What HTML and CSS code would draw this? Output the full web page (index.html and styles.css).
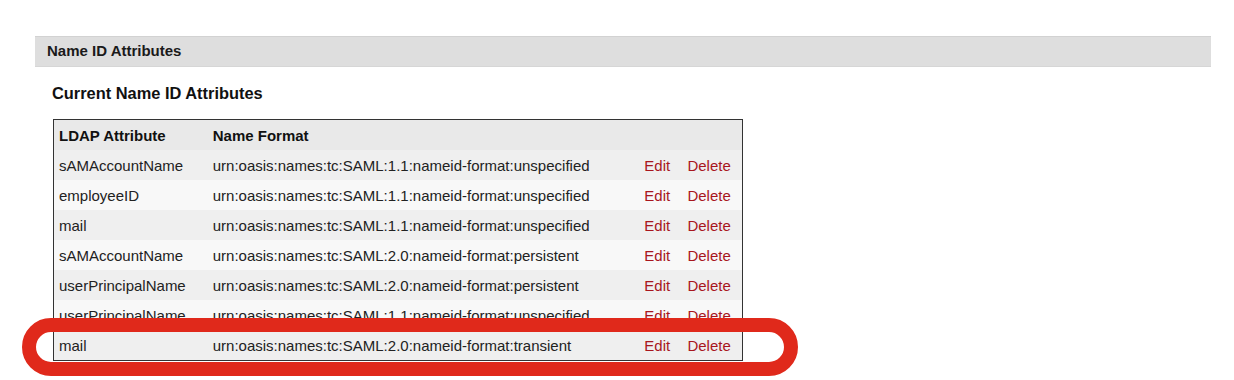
FILE: index.html
```html
<!DOCTYPE html>
<html lang="en">

<head>
    <meta charset="UTF-8">
    <title>Name ID Attributes</title>
    <link rel="stylesheet" href="styles.css">
</head>

<body>
    <div class="page">
        <div class="section-bar">Name ID Attributes</div>
        <div class="section-body">
            <h3>Current Name ID Attributes</h3>
            <table class="attr-table">
                <colgroup>
                    <col class="col-attr">
                    <col class="col-format">
                    <col class="col-edit">
                    <col class="col-delete">
                </colgroup>
                <thead>
                    <tr>
                        <th>LDAP Attribute</th>
                        <th>Name Format</th>
                        <th></th>
                        <th></th>
                    </tr>
                </thead>
                <tbody>
                    <tr>
                        <td>sAMAccountName</td>
                        <td>urn:oasis:names:tc:SAML:1.1:nameid-format:unspecified</td>
                        <td><a href="#">Edit</a></td>
                        <td><a href="#">Delete</a></td>
                    </tr>
                    <tr>
                        <td>employeeID</td>
                        <td>urn:oasis:names:tc:SAML:1.1:nameid-format:unspecified</td>
                        <td><a href="#">Edit</a></td>
                        <td><a href="#">Delete</a></td>
                    </tr>
                    <tr>
                        <td>mail</td>
                        <td>urn:oasis:names:tc:SAML:1.1:nameid-format:unspecified</td>
                        <td><a href="#">Edit</a></td>
                        <td><a href="#">Delete</a></td>
                    </tr>
                    <tr>
                        <td>sAMAccountName</td>
                        <td>urn:oasis:names:tc:SAML:2.0:nameid-format:persistent</td>
                        <td><a href="#">Edit</a></td>
                        <td><a href="#">Delete</a></td>
                    </tr>
                    <tr>
                        <td>userPrincipalName</td>
                        <td>urn:oasis:names:tc:SAML:2.0:nameid-format:persistent</td>
                        <td><a href="#">Edit</a></td>
                        <td><a href="#">Delete</a></td>
                    </tr>
                    <tr>
                        <td>userPrincipalName</td>
                        <td>urn:oasis:names:tc:SAML:1.1:nameid-format:unspecified</td>
                        <td><a href="#">Edit</a></td>
                        <td><a href="#">Delete</a></td>
                    </tr>
                    <tr>
                        <td>mail</td>
                        <td>urn:oasis:names:tc:SAML:2.0:nameid-format:transient</td>
                        <td><a href="#">Edit</a></td>
                        <td><a href="#">Delete</a></td>
                    </tr>
                </tbody>
            </table>
        </div>

        <!-- highlight ring drawn over the last row -->
        <svg class="highlight" width="776" height="58" viewBox="0 0 776 58">
            <rect x="7" y="7" width="762" height="44" rx="22" ry="22" fill="none" stroke="#e0291b" stroke-width="14" />
        </svg>
    </div>
</body>

</html>
```

FILE: styles.css
```css
body {
    margin: 0;
    padding: 0;
    background-color: #ffffff;
    font-family: "Liberation Sans", Arial, sans-serif;
    color: #222222;
}

.page {
    position: relative;
    padding: 36px 0 0 35px;
    height: 380px;
    box-sizing: border-box;
}

.section-bar {
    width: 1176px;
    height: 31px;
    box-sizing: border-box;
    background-color: #dedede;
    border-top: 1px solid #d2d2d2;
    border-bottom: 1px solid #d6d6d6;
    padding: 0 12px;
    font-size: 15px;
    font-weight: bold;
    line-height: 28px;
    color: #1a1a1a;
}

.section-body {
    padding-left: 18px;
}

h3 {
    margin: 16px 0 16px -1px;
    font-size: 16.4px;
    font-weight: bold;
    line-height: 20px;
    color: #111111;
}

.attr-table {
    table-layout: fixed;
    width: 690px;
    border-collapse: collapse;
    border: 1px solid #333333;
    font-size: 15px;
}

.col-attr {
    width: 153px;
}

.col-format {
    width: 431px;
}

.col-edit {
    width: 43px;
}

.col-delete {
    width: 61px;
}

.attr-table th,
.attr-table td {
    height: 30px;
    padding: 0 6px;
    text-align: left;
    white-space: nowrap;
    overflow: hidden;
}

.attr-table th:first-child,
.attr-table td:first-child {
    padding-left: 5px;
}

.attr-table th {
    background-color: #e9e9e9;
    font-weight: bold;
    color: #111111;
}

.attr-table tbody tr:nth-child(odd) {
    background-color: #efefef;
}

.attr-table tbody tr:nth-child(even) {
    background-color: #f8f8f8;
}

.attr-table a {
    color: #a8161d;
    text-decoration: none;
}

.highlight {
    position: absolute;
    left: 22px;
    top: 318px;
}
```
